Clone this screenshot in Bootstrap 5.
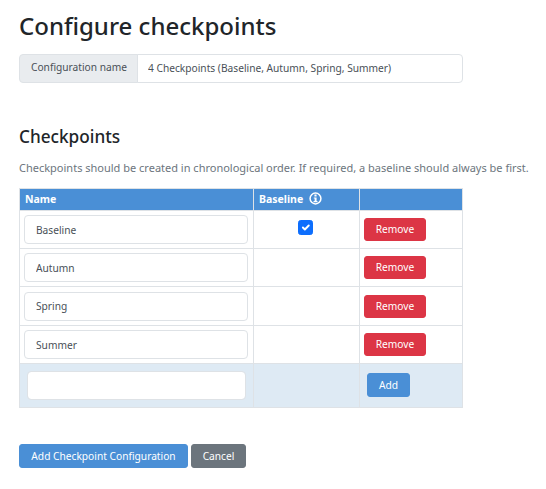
<!DOCTYPE html>
<html lang="en">
<head>
<meta charset="utf-8">
<title>Configure checkpoints</title>
<link rel="stylesheet" href="https://cdn.jsdelivr.net/npm/bootstrap@5.3.0/dist/css/bootstrap.min.css">
<style>
body{font-family:"Noto Sans",sans-serif;font-size:11px;color:#212529;background:#fff;}
.page-wrap{padding:11px 0 0 19px;width:463px;}
.page-title{font-size:24px;font-weight:500;line-height:30px;margin:0 0 13px;white-space:nowrap;}
.name-group{height:29px;}
.name-group .input-group-text{font-size:10.2px;padding:0 10px 1px 11px;background:#e9ecef;color:#495057;border-radius:4px 0 0 4px;}
.name-group .form-control{font-size:10.2px;padding:0 10px;color:#495057;border-radius:0 4px 4px 0;}
.sec-title{font-size:17.2px;font-weight:500;line-height:22px;margin:43px 0 12px;}
.sec-note{font-size:11px;line-height:16px;color:#6c757d;margin:0 0 12px;white-space:nowrap;}
.cp-table{width:444px;table-layout:fixed;margin:0;border-color:#dee2e6;font-size:10.5px;}
.cp-table>thead>tr>th{background:#4a8fd6;color:#fff;font-weight:700;padding:2px 5px;height:22px;line-height:17px;box-shadow:none;border-color:#dee2e6;}
.cp-table>tbody>tr>td{padding:4px;height:38px;vertical-align:middle;box-shadow:none;}
.cp-table>tbody>tr.tall-row>td{height:39px;}
.cp-table>tbody>tr.add-row>td{background:#deeaf4;height:44px;box-shadow:none;}
.col-a{width:234px;}.col-b{width:106px;}
.cp-input{height:29px;font-size:10.2px;padding:0 11px;color:#495057;border-radius:4px;width:224px;}
.add-row .cp-input{margin-left:3px;width:219px;}
.cp-check{width:15px;height:15px;margin:0 2px 4px 0;display:block;border-radius:3px;}
.btn-rm{background:#dc3545;border-color:#dc3545;color:#fff;font-size:10.2px;padding:0;width:62px;height:23px;line-height:21px;border-radius:3px;}
.btn-blue{background:#4a8fd6;border-color:#4a8fd6;color:#fff;font-size:10.2px;padding:0;height:24px;line-height:22px;border-radius:3px;}
.btn-add{width:43px;margin:0 0 2px 3px;}
.btn-save{width:169px;}
.btn-gray{background:#6c757d;border-color:#6c757d;color:#fff;font-size:10.2px;padding:0;width:55px;height:24px;line-height:22px;border-radius:3px;}
.act-row{margin-top:36px;gap:3px;}
.info-ic{vertical-align:-2px;margin-left:3px;}
</style>
</head>
<body>
<div class="page-wrap">
  <h1 class="page-title">Configure checkpoints</h1>
  <div class="input-group name-group">
    <span class="input-group-text">Configuration name</span>
    <input type="text" class="form-control" value="4 Checkpoints (Baseline, Autumn, Spring, Summer)">
  </div>
  <h2 class="sec-title">Checkpoints</h2>
  <p class="sec-note">Checkpoints should be created in chronological order. If required, a baseline should always be first.</p>
  <table class="table table-bordered cp-table">
    <colgroup><col class="col-a"><col class="col-b"><col></colgroup>
    <thead>
      <tr>
        <th>Name</th>
        <th>Baseline <svg class="info-ic" width="13" height="13" viewBox="0 0 12 12" aria-hidden="true"><circle cx="6" cy="6" r="5" fill="none" stroke="#fff" stroke-width="1.4"/><path d="M5 2.4h2v1.7H5zM4.4 5h2.6v3.2h.8v1.2H4.2V8.200h1V6.100h-.8z" fill="#fff"/></svg></th>
        <th></th>
      </tr>
    </thead>
    <tbody>
      <tr>
        <td><input type="text" class="form-control cp-input" value="Baseline"></td>
        <td><div class="d-flex justify-content-center"><input type="checkbox" class="form-check-input cp-check" checked></div></td>
        <td><button type="button" class="btn btn-rm">Remove</button></td>
      </tr>
      <tr>
        <td><input type="text" class="form-control cp-input" value="Autumn"></td>
        <td></td>
        <td><button type="button" class="btn btn-rm">Remove</button></td>
      </tr>
      <tr class="tall-row">
        <td><input type="text" class="form-control cp-input" value="Spring"></td>
        <td></td>
        <td><button type="button" class="btn btn-rm">Remove</button></td>
      </tr>
      <tr>
        <td><input type="text" class="form-control cp-input" value="Summer"></td>
        <td></td>
        <td><button type="button" class="btn btn-rm">Remove</button></td>
      </tr>
      <tr class="add-row">
        <td><input type="text" class="form-control cp-input"></td>
        <td></td>
        <td><button type="button" class="btn btn-blue btn-add">Add</button></td>
      </tr>
    </tbody>
  </table>
  <div class="d-flex act-row">
    <button type="button" class="btn btn-blue btn-save">Add Checkpoint Configuration</button>
    <button type="button" class="btn btn-gray">Cancel</button>
  </div>
</div>
<script src="https://cdn.jsdelivr.net/npm/bootstrap@5.3.0/dist/js/bootstrap.bundle.min.js"></script>
</body>
</html>
